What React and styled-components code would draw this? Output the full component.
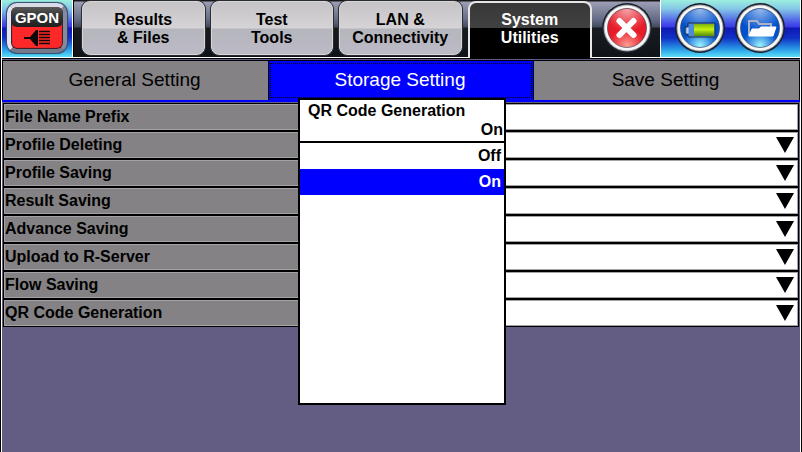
import React, { useState } from "react";
import styled, { createGlobalStyle, css } from "styled-components";

const GlobalStyle = createGlobalStyle`
  * { box-sizing: border-box; }
  html, body, #root { height: 100%; }
  body {
    margin: 0;
    background: #635d84;
    font-family: "Liberation Sans", Arial, sans-serif;
  }
  button, input, select { font: inherit; }
`;

const blueBand = css`
  background: linear-gradient(
    to bottom,
    #9cefde 0px,
    #84c6e7 9px,
    #4a59e7 22px,
    #3938e7 27px,
    #1018b5 28px,
    #1030c6 38px,
    #299ae7 49px,
    #5adff7 57px
  );
`;

const darkBand = css`
  background: linear-gradient(#181818 0, #181818 1px, #9c9eb5 2px, #636984 20px, #424a5c 27px, #181c21 28px, #101418 57px);
`;

const Screen = styled.div`
  display: flex;
  flex-direction: column;
  min-height: 100%;
  border: solid #000;
  border-width: 0 1px;
  background: #fff;
  padding: 0 1px;
`;

const TopBar = styled.header`
  display: flex;
  height: 58px;
`;

const ModeCell = styled.div`
  ${blueBand}
  display: flex;
  justify-content: center;
  width: 70px;
  height: 57px;
`;

const ModeButton = styled.button`
  display: flex;
  flex-direction: column;
  overflow: hidden;
  width: 60px;
  height: 50px;
  margin: 3px 0 0;
  border: 4px solid;
  border-color: #d6dbe7 #848a9c #737a8c #dee3ef;
  border-radius: 10px;
  padding: 0;
  background: #ff2829;
  box-shadow: 0 0 1px 1px #31456b, inset 0 0 1px 1px #29202b;
`;

const ModeName = styled.span`
  width: 100%;
  height: 20px;
  border-radius: 4px 4px 6px 6px;
  background: linear-gradient(#5a595a, #393839 40%, #212021);
  color: #fff;
  font-size: 15px;
  font-weight: bold;
  line-height: 22px;
  text-align: center;
`;

const ModeIcon = styled.svg`
  align-self: center;
  width: 28px;
  height: 18px;
  margin-top: 2px;
`;

const MainNav = styled.nav`
  ${darkBand}
  flex: 1;
  display: flex;
  gap: 6px;
  height: 57px;
  margin-left: 1px;
  border-left: 1px solid #000;
  padding: 1px 0 0 8px;
`;

const MainTab = styled.button`
  flex: 1;
  height: 54px;
  border: 1px solid #d6d7d6;
  border-radius: 8px;
  padding: 2px 0 0;
  background: linear-gradient(#c6c3c6 0, #d6d3d6 26px, #b5b6bd 27px, #bdbac6 54px);
  box-shadow: 0 0 0 1px #292c31;
  color: #000;
  font-size: 16px;
  font-weight: bold;
  line-height: 18px;
  white-space: pre-line;
  ${(p) => p.$active && css`
    height: 57px;
    border: 2px solid #e7e7e7;
    border-bottom: 0;
    border-radius: 8px 8px 0 0;
    padding: 0 0 4px;
    background: linear-gradient(#393839 0, #424142 25px, #000 25px);
    box-shadow: none;
    color: #fff;
  `}
`;

const CloseCell = styled.div`
  ${darkBand}
  width: 68px;
  height: 57px;
  padding-left: 10px;
`;

const ToolCell = styled.div`
  ${blueBand}
  display: flex;
  gap: 10px;
  width: 139px;
  height: 57px;
  margin-left: 1px;
  padding-left: 14px;
`;

const RoundButton = styled.button`
  display: flex;
  align-items: flex-start;
  width: 50px;
  height: 57px;
  border: 0;
  padding: 3px 0 0;
  background: none;
`;

const DiscDrawing = styled.svg`
  width: 50px;
  height: 50px;
`;

const Body = styled.main`
  position: relative;
  flex: 1;
  background: #635d84;
  border-top: 1px solid #000;
  padding-top: 1px;
`;

const SubTabs = styled.nav`
  display: grid;
  grid-template-columns: repeat(3, 1fr);
  border-top: 1px solid #000;
`;

const SubTab = styled.button`
  display: flex;
  align-items: center;
  justify-content: center;
  height: 39px;
  border: 0 solid #000;
  padding: 0 2px 2px 0;
  background: #848284;
  color: #000;
  font-size: 19px;
  line-height: 24px;
  &:first-child { border-left-width: 1px; }
  &:last-child { border-right-width: 1px; }
  ${(p) => p.$active && css`
    border-width: 0 1px;
    background: #0000ff;
    color: #fff;
    outline: 1px dotted #000;
    outline-offset: -3px;
  `}
`;

const Settings = styled.form`
  border-top: 2px solid #0000ff;
  padding: 1px 1px 0;
`;

const Row = styled.div`
  display: grid;
  grid-template-columns: 1fr 1fr;
  height: 28px;
  border: 1px solid #000;
`;

const RowLabel = styled.label`
  border: 1px solid #a5a2a5;
  background: #848284;
  color: #000;
  font-size: 16px;
  font-weight: bold;
  line-height: 24px;
  white-space: nowrap;
`;

const Field = styled.div`
  display: grid;
  align-items: center;
  border: 1px solid #a5a2a5;
  background: #fff;
  > * { grid-area: 1 / 1; }
`;

const TextInput = styled.input`
  width: 100%;
  height: 24px;
  border: 0;
  padding: 0 4px;
  background: none;
`;

const Select = styled.select`
  appearance: none;
  width: 100%;
  height: 24px;
  border: 0;
  padding: 0 4px;
  background: none;
`;

const Arrow = styled.svg`
  justify-self: end;
  width: 18px;
  height: 16px;
  margin-right: 3px;
  pointer-events: none;
`;

const Popup = styled.section`
  position: absolute;
  top: 39px;
  left: calc(50% - 103px);
  width: 208px;
  height: 307px;
  border: 2px solid #000;
  background: #fff;
  font-size: 16px;
  font-weight: bold;
`;

const PopupHeader = styled.div`
  display: flex;
  flex-direction: column;
  height: 43px;
  border-bottom: 2px solid #000;
  padding: 1px 1px 0 8px;
  line-height: 19px;
`;

const PopupTitle = styled.span`
  white-space: nowrap;
`;

const PopupValue = styled.output`
  align-self: flex-end;
`;

const Option = styled.button`
  display: block;
  width: 100%;
  height: 26px;
  border: 0;
  padding: 0 3px;
  text-align: right;
  font-weight: bold;
  background: ${(p) => (p.$selected ? "#0000ff" : "#fff")};
  color: ${(p) => (p.$selected ? "#fff" : "#000")};
`;

function Disc({ id, inner, outer, children }) {
  return (
    <DiscDrawing viewBox="0 0 50 50" aria-hidden="true">
      <defs>
        <radialGradient id={id} cx="50%" cy="95%" r="75%">
          <stop offset="0" stopColor={inner} />
          <stop offset="0.6" stopColor={outer} />
          <stop offset="1" stopColor={outer} />
        </radialGradient>
        <radialGradient id={id + "-gloss"} cx="50%" cy="0%" r="60%">
          <stop offset="0" stopColor="#fff" stopOpacity="0.6" />
          <stop offset="1" stopColor="#fff" stopOpacity="0" />
        </radialGradient>
      </defs>
      <circle cx="25" cy="25" r="25" fill="#182029" />
      <circle cx="25" cy="25" r="23.500" fill="#9c9ea5" />
      <circle cx="25" cy="25" r="22.500" fill="#f7f7f7" />
      <circle cx="25" cy="25" r="19.500" fill={`url(#${id})`} stroke="#424a63" strokeWidth="0.7" />
      <circle cx="25" cy="25" r="19" fill={`url(#${id}-gloss)`} />
      {children}
    </DiscDrawing>
  );
}

const mainTabs = ["Results\n& Files", "Test\nTools", "LAN &\nConnectivity", "System\nUtilities"];
const subTabs = ["General Setting", "Storage Setting", "Save Setting"];
const settings = [
  "Profile Deleting",
  "Profile Saving",
  "Result Saving",
  "Advance Saving",
  "Upload to R-Server",
  "Flow Saving",
  "QR Code Generation",
];

export default function App() {
  const [choice, setChoice] = useState("On");
  return (
    <>
      <GlobalStyle />
      <Screen>
        <TopBar>
          <ModeCell>
            <ModeButton type="button">
              <ModeName>GPON</ModeName>
              <ModeIcon viewBox="0 0 28 18" aria-hidden="true">
                <path d="M1 8h6l6-7h2v16h-2l-6-7H1z" fill="#100808" />
                <path d="M16 2.500h11M16 5.500h11M16 8.500h11M16 11.500h11M16 14.500h11" stroke="#100808" strokeWidth="1.500" />
              </ModeIcon>
            </ModeButton>
          </ModeCell>
          <MainNav>
            {mainTabs.map((name, i) => (
              <MainTab key={name} type="button" $active={i === 3}>{name}</MainTab>
            ))}
          </MainNav>
          <CloseCell>
            <RoundButton type="button" aria-label="Close">
              <Disc id="close" inner="#ff9c94" outer="#e71c29">
                <path d="M17.500 18l14 14M31.500 18l-14 14" stroke="#fff" strokeWidth="6" strokeLinecap="round" />
              </Disc>
            </RoundButton>
          </CloseCell>
          <ToolCell>
            <RoundButton type="button" aria-label="Battery">
              <Disc id="battery" inner="#9cf3ff" outer="#0051ce">
                <defs>
                  <linearGradient id="charge" x1="0" y1="0" x2="0" y2="1">
                    <stop offset="0" stopColor="#7bb210" />
                    <stop offset="0.45" stopColor="#c6f310" />
                    <stop offset="1" stopColor="#528a08" />
                  </linearGradient>
                </defs>
                <path d="M10 24h3v-4h27v14H13v-3h-3z" fill="#4a8ade" stroke="#212c39" />
                <path d="M12.500 24.500v6" stroke="#bdd7f7" strokeWidth="2" />
                <rect x="19" y="21" width="20" height="12" fill="url(#charge)" />
              </Disc>
            </RoundButton>
            <RoundButton type="button" aria-label="Open folder">
              <Disc id="folder" inner="#9cf3ff" outer="#0051ce">
                <path d="M14 33V18h8l2 3h12v4" fill="none" stroke="#adb2c6" strokeWidth="2" />
                <path d="M14 33l3-7h7l2-2h15l-3 9z" fill="#fff" stroke="#fff" strokeLinejoin="round" />
              </Disc>
            </RoundButton>
          </ToolCell>
        </TopBar>
        <Body>
          <SubTabs>
            {subTabs.map((name, i) => (
              <SubTab key={name} type="button" $active={i === 1}>{name}</SubTab>
            ))}
          </SubTabs>
          <Settings>
            <Row>
              <RowLabel htmlFor="prefix">File Name Prefix</RowLabel>
              <Field><TextInput id="prefix" type="text" /></Field>
            </Row>
            {settings.map((name, i) => (
              <Row key={name}>
                <RowLabel htmlFor={`setting-${i}`}>{name}</RowLabel>
                <Field>
                  <Select id={`setting-${i}`}><option value="" /></Select>
                  <Arrow viewBox="0 0 18 16" aria-hidden="true"><path d="M0 0h18L9 16z" /></Arrow>
                </Field>
              </Row>
            ))}
          </Settings>
          <Popup aria-label="QR Code Generation">
            <PopupHeader>
              <PopupTitle>QR Code Generation</PopupTitle>
              <PopupValue>{choice}</PopupValue>
            </PopupHeader>
            {["Off", "On"].map((value) => (
              <Option
                key={value}
                type="button"
                aria-pressed={choice === value}
                $selected={choice === value}
                onClick={() => setChoice(value)}
              >
                {value}
              </Option>
            ))}
          </Popup>
        </Body>
      </Screen>
    </>
  );
}
